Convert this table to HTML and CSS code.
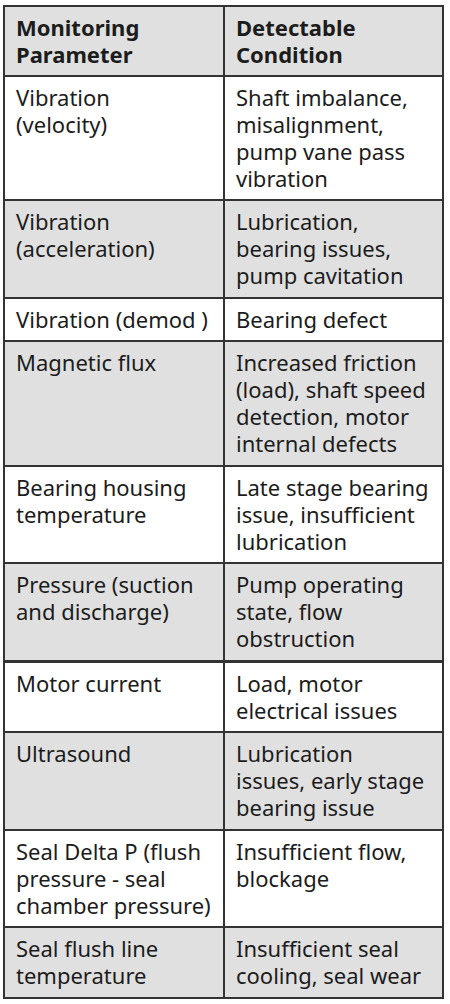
FILE: index.html
```html
<!DOCTYPE html>
<html>
<head>
<meta charset="utf-8">
<link rel="stylesheet" href="styles.css">
</head>
<body>
<table class="grid">
  <colgroup><col class="c1"><col class="c2"></colgroup>
  <thead>
    <tr class="head"><th>Monitoring Parameter</th><th>Detectable Condition</th></tr>
  </thead>
  <tbody>
    <tr class="w"><td class="narrow">Vibration (velocity)</td><td>Shaft imbalance, misalignment, pump vane pass vibration</td></tr>
    <tr class="g"><td class="narrow">Vibration (acceleration)</td><td>Lubrication, bearing issues, pump cavitation</td></tr>
    <tr class="w"><td>Vibration (demod )</td><td>Bearing defect</td></tr>
    <tr class="g"><td>Magnetic flux</td><td>Increased friction (load), shaft speed detection, motor internal defects</td></tr>
    <tr class="w"><td>Bearing housing temperature</td><td>Late stage bearing issue, insufficient lubrication</td></tr>
    <tr class="g"><td>Pressure (suction and discharge)</td><td>Pump operating state, flow obstruction</td></tr>
    <tr class="w thick"><td>Motor current</td><td>Load, motor electrical issues</td></tr>
    <tr class="g"><td>Ultrasound</td><td>Lubrication<br>issues, early stage bearing issue</td></tr>
    <tr class="w"><td>Seal Delta P (flush pressure - seal chamber pressure)</td><td>Insufficient flow, blockage</td></tr>
    <tr class="g"><td>Seal flush line temperature</td><td>Insufficient seal cooling, seal wear</td></tr>
  </tbody>
</table>
</body>
</html>
```
FILE: styles.css
```css
html, body {
  margin: 0;
  padding: 0;
  background: #ffffff;
}
body {
  padding: 5px 0 0 3px;
  font-family: "Noto Sans", "Open Sans", sans-serif;
  color: #1c1c1c;
}
.grid {
  border-collapse: collapse;
  width: 439px;
  table-layout: fixed;
  border: 2px solid #333333;
}
.c1 { width: 220px; }
.c2 { width: 219px; }
.grid th, .grid td {
  border: 2px solid #333333;
  text-align: left;
  vertical-align: top;
  font-size: 22px;
  line-height: 27px;
  padding: 7px 4px 7.5px 11px;
}
.grid td.narrow {
  padding-right: 40px;
}
.grid th {
  font-weight: 700;
  padding-top: 6.5px;
  padding-bottom: 7px;
}
.head { background: #e0e0e0; }
.g { background: #e0e0e0; }
.w { background: #ffffff; }
.thick td { border-top-width: 3px; }
```
